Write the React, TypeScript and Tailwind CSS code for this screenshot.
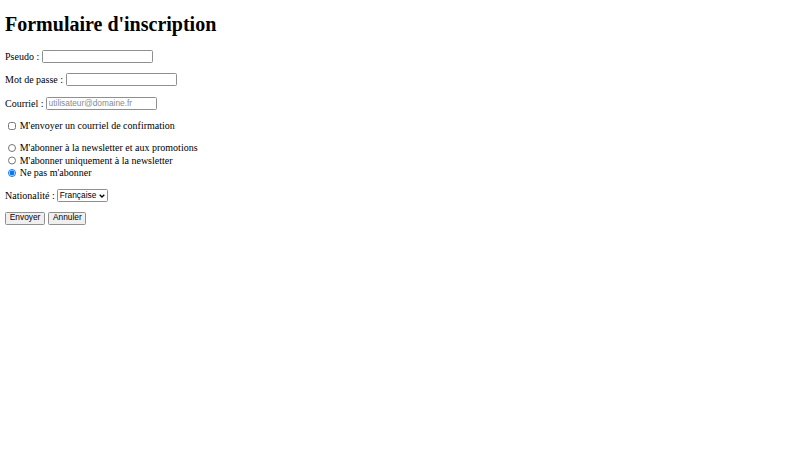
import { useState } from "react";

const serif = "font-['Liberation_Serif','Times_New_Roman',serif]";
const sans = "font-['Liberation_Sans',Arial,sans-serif]";

const TextField = ({ type = "text", placeholder }: { type?: string; placeholder?: string }) => (
  <input
    type={type}
    placeholder={placeholder}
    className={`${sans} w-[111px] h-[13px] px-[1.5px] text-[8.33px] text-black bg-white border border-[#8f8f8f] rounded-[1.5px] align-middle placeholder:text-[#8a8a8a] outline-none`}
  />
);

const Radio = ({ label, checked, onChange }: { label: string; checked: boolean; onChange: () => void }) => (
  <label className="flex items-center h-[12.4px]">
    <input
      type="radio"
      name="newsletter"
      checked={checked}
      onChange={onChange}
      className="w-[8.2px] h-[8.2px] ml-[3px] mr-[3.5px]"
    />
    {label}
  </label>
);

const App = () => {
  const [abonnement, setAbonnement] = useState("aucun");

  return (
    <div className={`${serif} text-[10px] leading-[1.15] text-black bg-white min-h-[450px] px-[5px] pt-[13.4px]`}>
      <h1 className="text-[20px] font-bold leading-[23px] mb-[13.4px]">Formulaire d'inscription</h1>

      <form className="flex flex-col gap-[10px]" onSubmit={(e) => e.preventDefault()}>
        <p className="flex items-center h-[13.4px]">
          <span className="mr-[2.5px]">Pseudo :</span>
          <TextField />
        </p>
        <p className="flex items-center h-[13.4px]">
          <span className="mr-[2.5px]">Mot de passe :</span>
          <TextField type="password" />
        </p>
        <p className="flex items-center h-[13.4px]">
          <span className="mr-[2.5px]">Courriel :</span>
          <TextField type="email" placeholder="utilisateur@domaine.fr" />
        </p>

        <p className="flex items-center h-[12px]">
          <input type="checkbox" className="w-[8.2px] h-[8.2px] ml-[2.5px] mr-[4px]" />
          M'envoyer un courriel de confirmation
        </p>

        <div className="flex flex-col">
          <Radio label="M'abonner à la newsletter et aux promotions" checked={abonnement === "tout"} onChange={() => setAbonnement("tout")} />
          <Radio label="M'abonner uniquement à la newsletter" checked={abonnement === "news"} onChange={() => setAbonnement("news")} />
          <Radio label="Ne pas m'abonner" checked={abonnement === "aucun"} onChange={() => setAbonnement("aucun")} />
        </div>

        <p className="flex items-center h-[12.5px]">
          <span className="mr-[2.5px]">Nationalité :</span>
          <span className={`${sans} flex items-center h-[12.5px] w-[51px] pl-[1.5px] pr-[2px] justify-between text-[8.33px] bg-white border border-[#8f8f8f] rounded-[1.5px]`}>
            Française
            <svg width="6" height="4" viewBox="0 0 6 4" className="mt-[1px]">
              <path d="M0.7 0.7 L3 3 L5.3 0.7" fill="none" stroke="#000" strokeWidth="1.3" />
            </svg>
          </span>
        </p>

        <p className="flex items-center gap-[3px] h-[13px]">
          <button type="submit" className={`${sans} h-[13px] px-[3.8px] text-[8.33px] bg-[#efefef] border border-[#8f8f8f] rounded-[1.5px]`}>
            Envoyer
          </button>
          <button type="reset" className={`${sans} h-[13px] px-[3.8px] text-[8.33px] bg-[#efefef] border border-[#8f8f8f] rounded-[1.5px]`}>
            Annuler
          </button>
        </p>
      </form>
    </div>
  );
};

export default App;
